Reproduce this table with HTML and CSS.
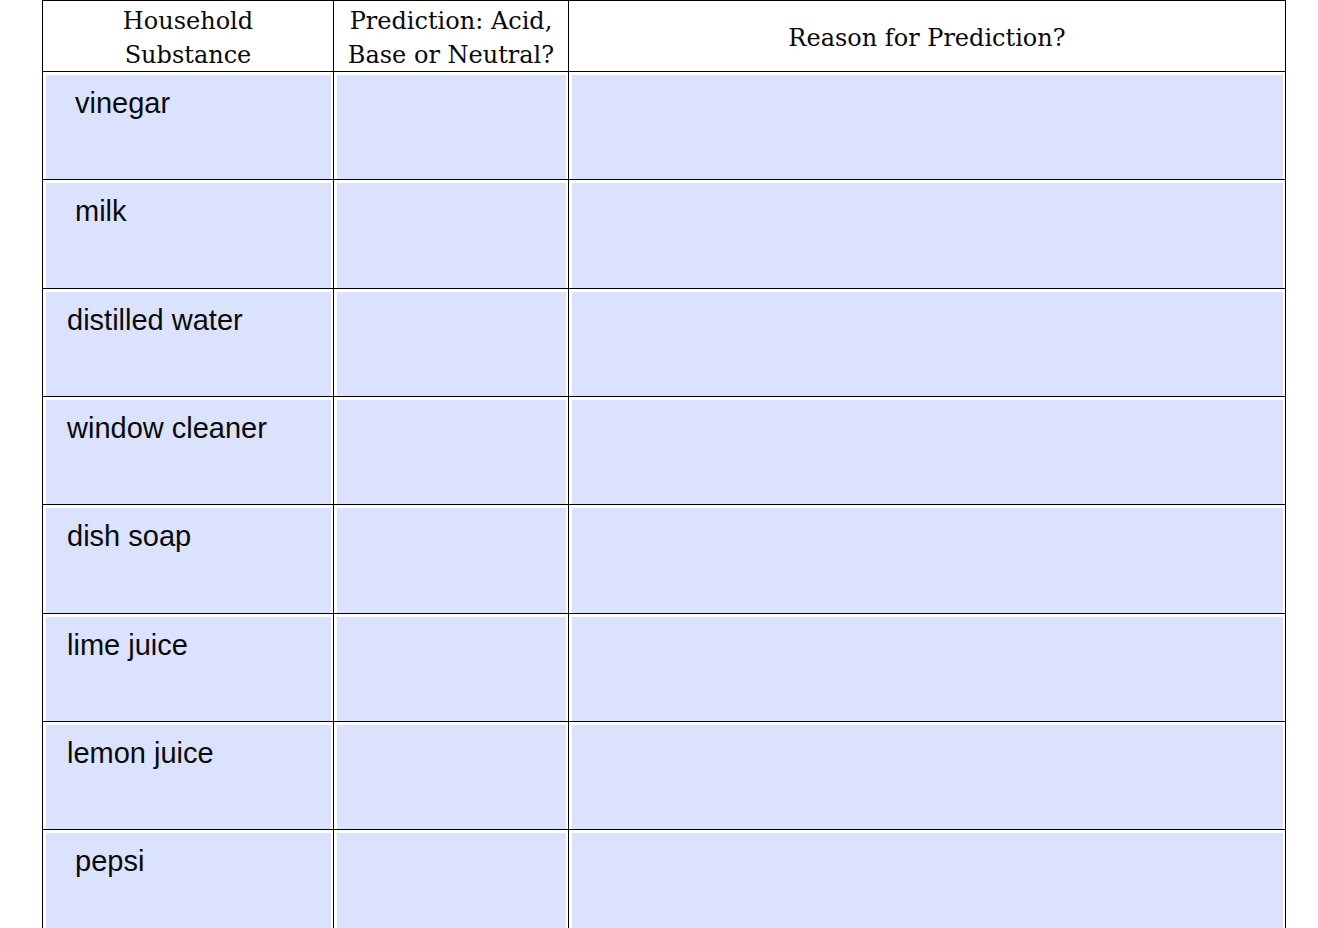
FILE: index.html
```html
<!DOCTYPE html>
<html lang="en">
<head>
<meta charset="utf-8">
<title>Household Substances</title>
<link rel="stylesheet" href="styles.css">
</head>
<body>
<div class="sheet">
  <div class="head"><span>Household<br>Substance</span></div>
  <div class="head"><span>Prediction: Acid,<br>Base or Neutral?</span></div>
  <div class="head"><span>Reason for Prediction?</span></div>

  <div class="cell"><div class="fill name indent">vinegar</div></div>
  <div class="cell"><div class="fill"></div></div>
  <div class="cell"><div class="fill"></div></div>

  <div class="cell"><div class="fill name indent">milk</div></div>
  <div class="cell"><div class="fill"></div></div>
  <div class="cell"><div class="fill"></div></div>

  <div class="cell"><div class="fill name">distilled water</div></div>
  <div class="cell"><div class="fill"></div></div>
  <div class="cell"><div class="fill"></div></div>

  <div class="cell"><div class="fill name">window cleaner</div></div>
  <div class="cell"><div class="fill"></div></div>
  <div class="cell"><div class="fill"></div></div>

  <div class="cell"><div class="fill name">dish soap</div></div>
  <div class="cell"><div class="fill"></div></div>
  <div class="cell"><div class="fill"></div></div>

  <div class="cell"><div class="fill name">lime juice</div></div>
  <div class="cell"><div class="fill"></div></div>
  <div class="cell"><div class="fill"></div></div>

  <div class="cell"><div class="fill name">lemon juice</div></div>
  <div class="cell"><div class="fill"></div></div>
  <div class="cell"><div class="fill"></div></div>

  <div class="cell"><div class="fill name indent">pepsi</div></div>
  <div class="cell"><div class="fill"></div></div>
  <div class="cell"><div class="fill"></div></div>
</div>
</body>
</html>
```

FILE: styles.css
```css
html, body {
  margin: 0;
  padding: 0;
  background: #ffffff;
}

body {
  height: 928px;
  overflow: hidden;
}

.sheet {
  margin-left: 42px;
  width: 1242px;
  display: grid;
  grid-template-columns: 290px 234px 716px;
  grid-template-rows: 70px 107px 108px 107px 107px 108px 107px 107px 107px;
  gap: 1px;
  padding: 1px 0 1px 1px;
  border-right: 1px solid #000;
  box-sizing: content-box;
  background: #000000;
}

.head {
  background: #ffffff;
  display: flex;
  align-items: center;
  justify-content: center;
  text-align: center;
  font-family: "DejaVu Serif", "Liberation Serif", serif;
  font-size: 24px;
  line-height: 34px;
  color: #0a0a0a;
  padding-top: 4px;
  box-sizing: border-box;
}

.cell {
  background: #ffffff;
  padding: 3px 2px 0 3px;
  display: flex;
}

.fill {
  flex: 1;
  background: #dbe2fd;
}

.name {
  font-family: "Liberation Sans", Arial, sans-serif;
  font-size: 29px;
  color: #0a0a0a;
  padding: 12px 0 0 21px;
  line-height: 33px;
}

.name.indent {
  padding-left: 29px;
}
```
